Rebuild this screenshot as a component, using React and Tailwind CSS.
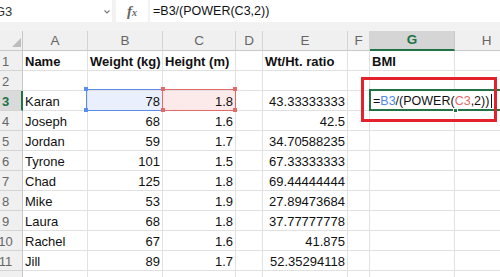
import React from "react";

const rows = [
  { n: 1, c: ["Name", "Weight (kg)", "Height (m)", "", "Wt/Ht. ratio", "", "BMI", ""], bold: true },
  { n: 2, c: ["", "", "", "", "", "", "", ""] },
  { n: 3, c: ["Karan", "78", "1.8", "", "43.33333333", "", "", ""] },
  { n: 4, c: ["Joseph", "68", "1.6", "", "42.5", "", "", ""] },
  { n: 5, c: ["Jordan", "59", "1.7", "", "34.70588235", "", "", ""] },
  { n: 6, c: ["Tyrone", "101", "1.5", "", "67.33333333", "", "", ""] },
  { n: 7, c: ["Chad", "125", "1.8", "", "69.44444444", "", "", ""] },
  { n: 8, c: ["Mike", "53", "1.9", "", "27.89473684", "", "", ""] },
  { n: 9, c: ["Laura", "68", "1.8", "", "37.77777778", "", "", ""] },
  { n: 10, c: ["Rachel", "67", "1.6", "", "41.875", "", "", ""] },
  { n: 11, c: ["Jill", "89", "1.7", "", "52.35294118", "", "", ""] },
  { n: 12, c: ["", "", "", "", "", "", "", ""] },
];

const letters = ["A", "B", "C", "D", "E", "F", "G", "H"];
const rightCols = [false, true, true, false, true, false, false, false];

function Cell({ text, bold, right, extra }) {
  return (
    <div
      className={
        "h-[20px] border-b border-r border-[#e1e1e1] flex items-center pt-[2px] whitespace-nowrap overflow-visible text-[13px] leading-none text-[#111] " +
        (right ? "justify-end pr-[2px] " : "justify-start pl-[2px] ") +
        (bold ? "font-bold " : "") +
        (extra || "")
      }
    >
      {text}
    </div>
  );
}

export default function App() {
  return (
    <div className="relative w-[500px] h-[277px] overflow-hidden bg-white font-['Liberation_Sans',sans-serif]">
      {/* formula bar */}
      <div className="flex h-[31px] bg-[#f2f2f2] pb-[9px]">
        <div className="relative w-[112px] h-[22px] bg-white flex items-center overflow-hidden">
          <span className="ml-[-5px] text-[13px] text-[#333] leading-none">G3</span>
          <svg className="absolute left-[104px] top-[10px]" width="6" height="4" viewBox="0 0 6 4">
            <path d="M0.5 0.5 L3 3 L5.5 0.5" fill="none" stroke="#777" strokeWidth="1.1" />
          </svg>
        </div>
        <div className="w-[4px]" />
        <div className="w-[32px] h-[22px] bg-white flex items-center justify-center">
          <span className="font-['Liberation_Serif',serif] italic font-bold text-[15px] text-[#666] leading-none">
            f<span className="text-[10px]">x</span>
          </span>
        </div>
        <div className="w-[2px]" />
        <div className="flex-1 h-[22px] bg-white flex items-center pl-[3px]">
          <span className="text-[12.5px] text-[#111] leading-none whitespace-nowrap">=B3/(POWER(C3,2))</span>
        </div>
      </div>

      {/* grid */}
      <div className="grid grid-cols-[23px_65px_75px_73px_27px_85px_22px_85px_64px] w-[519px]">
        {/* header row */}
        <div className="relative h-[20px] bg-[#f0f0f0] border-r border-b border-[#c8c8c8]">
          <svg className="absolute left-[12px] top-[7px]" width="10" height="10" viewBox="0 0 10 10">
            <polygon points="9,0 9,9 0,9" fill="#bdbdbd" />
          </svg>
        </div>
        {letters.map((l) =>
          l === "G" ? (
            <div
              key={l}
              className="h-[20px] bg-[#d5d5d5] border-r border-[#c8c8c8] border-b-2 border-b-[#217346] flex items-center justify-center text-[13.5px] font-bold text-[#217346] leading-none"
            >
              {l}
            </div>
          ) : (
            <div
              key={l}
              className="h-[20px] bg-[#f0f0f0] border-r border-b border-[#d4d4d4] border-b-[#c8c8c8] flex items-center justify-center text-[13.5px] text-[#666] leading-none"
            >
              {l}
            </div>
          )
        )}

        {rows.map((r) => (
          <React.Fragment key={r.n}>
            <div
              className={
                "h-[20px] overflow-hidden border-b flex items-center pt-[1px] " +
                (r.n === 3
                  ? "bg-[#dadada] border-b-[#d4d4d4] border-r-2 border-r-[#217346]"
                  : "bg-[#f0f0f0] border-[#d4d4d4] border-r border-r-[#c8c8c8]")
              }
            >
              <div
                className={
                  "w-[11px] shrink-0 text-center text-[13px] leading-none whitespace-nowrap flex justify-center " +
                  (r.n === 3 ? "text-[#217346] font-bold" : "text-[#666]")
                }
              >
                {r.n}
              </div>
            </div>
            {r.c.map((t, i) => {
              let extra = "";
              if (r.n === 3 && i === 1) extra = "bg-[#e9effc] ";
              if (r.n === 3 && i === 2) extra = "bg-[#fce9ea] ";
              return (
                <Cell
                  key={i}
                  text={t}
                  bold={r.bold}
                  right={!r.bold && rightCols[i]}
                  extra={extra}
                />
              );
            })}
          </React.Fragment>
        ))}
      </div>

      {/* B3 reference highlight */}
      <div className="absolute left-[86px] top-[89px] w-[77px] h-[22px] border-[1.5px] border-[#5b8def]" />
      <div className="absolute left-[84px] top-[87px] w-[4px] h-[4px] bg-[#5b8def]" />
      <div className="absolute left-[84px] top-[108px] w-[4px] h-[4px] bg-[#5b8def]" />

      {/* C3 reference highlight */}
      <div className="absolute left-[162px] top-[89px] w-[74px] h-[22px] border-[1.5px] border-[#e46a6a]" />
      <div className="absolute left-[161px] top-[87px] w-[4px] h-[4px] bg-[#e46a6a]" />
      <div className="absolute left-[233px] top-[87px] w-[4px] h-[4px] bg-[#e46a6a]" />
      <div className="absolute left-[161px] top-[108px] w-[4px] h-[4px] bg-[#e46a6a]" />
      <div className="absolute left-[233px] top-[108px] w-[4px] h-[4px] bg-[#e46a6a]" />

      {/* G3 edit box */}
      <div className="absolute left-[369px] top-[89px] w-[140px] h-[22px] border-2 border-[#217346] bg-white flex items-center pl-[2px] pt-[2px]">
        <span className="text-[12.5px] leading-none whitespace-nowrap text-[#111]">
          =<span className="text-[#4f86ec]">B3</span>/(POWER(<span className="text-[#e46a6a]">C3</span>,2))
        </span>
        <span className="ml-[2px] w-[1px] h-[14px] bg-[#111]" />
      </div>
      <div className="absolute left-[453px] top-[108px] w-[5px] h-[5px] bg-[#217346] border border-white" />

      {/* red annotation box */}
      <div className="absolute left-[361px] top-[77px] w-[136px] h-[45px] border-[3px] border-[#e3222b]" />
    </div>
  );
}
